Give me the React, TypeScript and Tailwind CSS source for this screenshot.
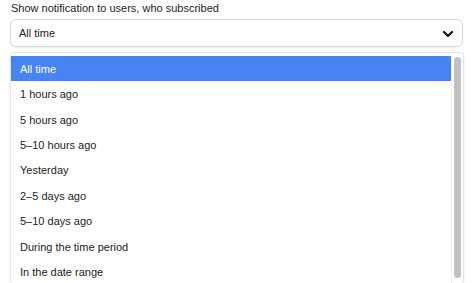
import React from "react";

const items = [
  "All time",
  "1 hours ago",
  "5 hours ago",
  "5–10 hours ago",
  "Yesterday",
  "2–5 days ago",
  "5–10 days ago",
  "During the time period",
  "In the date range",
];

export default function App() {
  return (
    <div
      className="w-[474px] h-[283px] overflow-hidden bg-white pl-[10px] pr-[11px] text-[#222222]"
      style={{ fontFamily: '"Liberation Sans", Arial, Helvetica, sans-serif' }}
    >
      <div className="h-[19px] pl-[1px] pt-[2px] text-[11px] leading-[13px]">
        Show notification to users, who subscribed
      </div>
      <div className="h-[28px] rounded-[6px] border border-[#d6d6d6] flex items-center justify-between pl-[8px] pr-[8px] pt-[1px] text-[11px] shadow-[0_1px_1px_rgba(0,0,0,0.04)]">
        <span>All time</span>
        <svg width="12" height="12" viewBox="0 0 12 12" className="mt-[1px]">
          <path d="M2 4 L6 8 L10 4" fill="none" stroke="#111" strokeWidth="2.2" strokeLinecap="round" strokeLinejoin="round" />
        </svg>
      </div>
      <div className="mt-[5px] h-[232px] w-[454px] border border-[#e6e6e6] rounded-[3px] shadow-[0_1px_3px_rgba(0,0,0,0.08)] flex pt-[3px]">
        <div className="flex-1 flex flex-col">
          {items.map((t, i) => (
            <div
              key={t}
              className={
                "h-[25.375px] shrink-0 flex items-center pl-[9px] pt-[1px] text-[11px] " +
                (i === 0 ? "bg-[#4684f2] text-white" : "")
              }
            >
              {t}
            </div>
          ))}
        </div>
        <div className="w-[12px] shrink-0 flex justify-center pt-[1px] pb-[2px] border-l border-[#f0f0f0]">
          <div className="w-[7px] h-[221px] rounded-full bg-[#c2c2c2]" />
        </div>
      </div>
    </div>
  );
}
